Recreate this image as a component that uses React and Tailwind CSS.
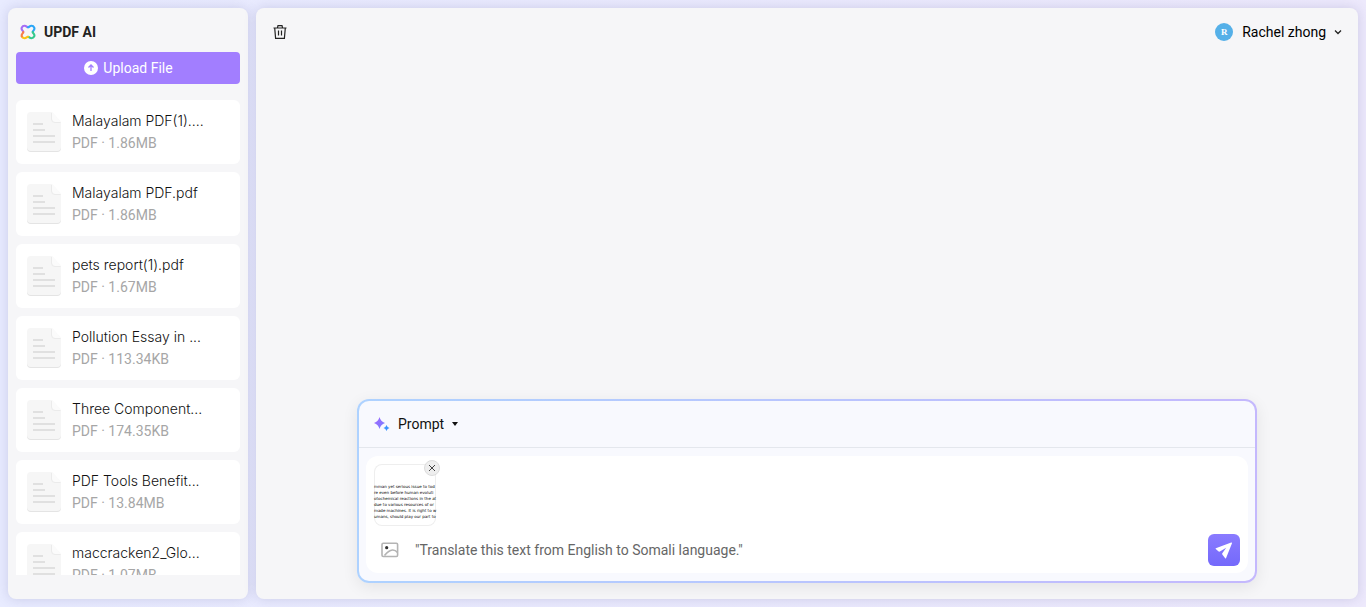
import React from "react";

const files = [
  { name: "Malayalam PDF(1)....", size: "PDF · 1.86MB" },
  { name: "Malayalam PDF.pdf", size: "PDF · 1.86MB" },
  { name: "pets report(1).pdf", size: "PDF · 1.67MB" },
  { name: "Pollution Essay in ...", size: "PDF · 113.34KB" },
  { name: "Three Component...", size: "PDF · 174.35KB" },
  { name: "PDF Tools Benefit...", size: "PDF · 13.84MB" },
  { name: "maccracken2_Glo...", size: "PDF · 1.07MB" },
];

const excerpt = [
  "mman yet serious issue to tod",
  "re even before human evoluti",
  "otochemical reactions in the at",
  "due to various resources of or",
  "made machines. It is right to w",
  "umans, should play our part to",
];

function Logo() {
  return (
    <svg className="size-4" viewBox="0 0 16 16" fill="none" strokeWidth="2.1" strokeLinecap="round" aria-hidden="true">
      <path d="M3.300 8C3.300 7.200 2.900 6.900 2.300 6.300C.7 4.500 2 1.900 4.500 1.800C6.400 1.700 6.700 3.300 8 3.300" stroke="#a66df5" />
      <path d="M8 3.300C9.300 3.300 9.600 1.700 11.500 1.800C14 1.900 15.300 4.500 13.700 6.300C13.100 6.900 12.700 7.200 12.700 8" stroke="#2ba6f7" />
      <path d="M12.700 8C12.700 8.800 13.100 9.100 13.700 9.700C15.300 11.500 14 14.100 11.500 14.200C9.600 14.300 9.300 12.700 8 12.700" stroke="#35c98c" />
      <path d="M8 12.700C6.700 12.700 6.400 14.300 4.500 14.200C3.200 14.100 2.200 13.400 1.800 12.300" stroke="#fbc414" />
      <path d="M1.800 12.300C1.500 11.400 1.600 10.400 2.300 9.700C2.900 9.100 3.300 8.800 3.300 8" stroke="#f67d4a" />
    </svg>
  );
}

function FileIcon() {
  return (
    <svg className="h-10 w-[34px] shrink-0" viewBox="0 0 34 40" aria-hidden="true">
      <path d="M4 1H25L34 11V36a4 4 0 0 1-4 4H4a4 4 0 0 1-4-4V4z" fill="#e4e4e4" />
      <path d="M4 0H25L34 10V35a4 4 0 0 1-4 4H4a4 4 0 0 1-4-4V4a4 4 0 0 1 4-4z" fill="#f6f6f6" />
      <path d="M25 0L34 10H28a3 3 0 0 1-3-3z" fill="#fbfbfb" />
      <path d="M24.500 1V7a3.500 3.500 0 0 0 3.500 3.500H33.500" fill="none" stroke="#ebebeb" />
      <path d="M6 11h10v2H6zM6 17h12v2H6zM6 23h22v2H6zM6 29h22v2H6z" fill="#e0e0e0" />
    </svg>
  );
}

function Sidebar() {
  return (
    <aside className="flex w-60 shrink-0 flex-col rounded-lg bg-[#f6f6f8] px-2 pt-3 pb-6 shadow-[0_0_12px_rgba(90,90,150,0.22)]">
      <div className="flex h-6 items-center gap-2 pl-1">
        <Logo />
        <h1 className="text-sm font-bold text-[#222]">UPDF AI</h1>
      </div>
      <button className="mt-2 flex h-8 shrink-0 items-center justify-center gap-1 rounded bg-[#a27eff] text-sm text-white">
        <svg className="size-4" viewBox="0 0 16 16" aria-hidden="true">
          <circle cx="8" cy="8" r="7" fill="#fff" />
          <path d="M8 11V5.500M5.500 7.500L8 5l2.500 2.500" fill="none" stroke="#a27eff" strokeWidth="1.300" />
        </svg>
        Upload File
      </button>
      <ul className="mt-4 flex min-h-0 flex-1 flex-col gap-2 overflow-hidden">
        {files.map((f) => (
          <li key={f.name} className="flex h-16 shrink-0 items-center gap-[11px] rounded-md bg-white pl-[11px]">
            <FileIcon />
            <div className="text-sm leading-[22px]">
              <p className="font-['Inter'] font-light text-[#111]">{f.name}</p>
              <p className="text-[#a6a6a6]">{f.size}</p>
            </div>
          </li>
        ))}
      </ul>
    </aside>
  );
}

function Composer() {
  return (
    <section className="w-full max-w-[900px] rounded-xl bg-[linear-gradient(90deg,#aed2ff,#c4b8fd)] p-0.5 shadow-[0_4px_16px_rgba(0,0,0,0.08)]">
      <div className="rounded-[10px] bg-[#f8f9fe]">
        <div className="flex h-[47px] items-center border-b border-[#e4e7ed] px-[15px]">
          <button className="flex items-center gap-2 text-sm text-[#111]">
            <svg className="size-4" viewBox="0 0 16 16" aria-hidden="true">
              <defs>
                <linearGradient id="spark" x1="0" y1="0" x2="1" y2="1">
                  <stop offset="0" stopColor="#a566ff" />
                  <stop offset="1" stopColor="#7480ff" />
                </linearGradient>
              </defs>
              <path d="M5.500 1Q6.600 5.400 11 7Q6.600 8.600 5.500 13Q4.400 8.600 0 7Q4.400 5.400 5.500 1z" fill="url(#spark)" />
              <path d="M12.500 9Q13.200 11.300 15.500 12Q13.200 12.700 12.500 15Q11.800 12.700 9.500 12Q11.800 11.300 12.500 9z" fill="#3a94ff" />
            </svg>
            Prompt
            <svg className="h-1 w-1.5" viewBox="0 0 6 4" aria-hidden="true">
              <path d="M0 0h6L3 4z" fill="#111" />
            </svg>
          </button>
        </div>
        <div className="px-[7px] py-2">
          <div className="rounded-xl bg-white px-2 pt-2 pb-[7px]">
            <div className="relative size-[62px] rounded-lg ring-1 ring-[#eeeeee] ring-inset">
              <div className="pt-5 font-['DejaVu_Sans'] text-[4px] leading-[6px] whitespace-nowrap text-black">
                {excerpt.map((line) => (
                  <p key={line}>{line}</p>
                ))}
              </div>
              <button
                aria-label="Remove image"
                className="absolute -top-1 -right-1 flex size-4 items-center justify-center rounded-full border border-[#dcdcdc] bg-[#eeeeee]"
              >
                <svg className="size-2" viewBox="0 0 8 8" aria-hidden="true">
                  <path d="M1 1l6 6M7 1L1 7" stroke="#444" strokeWidth="1" />
                </svg>
              </button>
            </div>
            <div className="mt-2 flex h-8 items-center">
              <button aria-label="Add image" className="ml-[7px]">
                <svg className="h-4 w-[18px]" viewBox="0 0 18 16" fill="none" aria-hidden="true">
                  <rect x="1" y="1.200" width="15.600" height="13.300" rx="1.200" stroke="#b4b4b4" strokeWidth="1.600" />
                  <circle cx="5.700" cy="5.700" r="1.600" fill="#333" />
                  <path d="M3.500 13.500C6 10.500 9 8.200 11.500 8C13.500 7.900 15.200 8.900 16.500 10.500" stroke="#b4b4b4" strokeWidth="1.600" />
                </svg>
              </button>
              <input
                type="text"
                aria-label="Message"
                defaultValue={'"Translate this text from English to Somali language."'}
                className="ml-4 min-w-0 flex-1 bg-transparent text-sm text-[#666] outline-none"
              />
              <button
                aria-label="Send"
                className="flex size-8 items-center justify-center rounded-md bg-gradient-to-b from-[#8a7bff] to-[#7469fb]"
              >
                <svg className="size-[18px]" viewBox="0 0 18 18" aria-hidden="true">
                  <path d="M16.200 1.500L.800 7.200Q.300 7.500.800 8L3.300 10.300Q4 10.900 4.900 10.500L11.200 6.800L7.300 12.300Q6.900 12.900 7.300 13.500L10.200 17.300Q10.700 17.800 11 17.200L17 2.300Q17.200 1.200 16.200 1.500z" fill="#fff" />
                </svg>
              </button>
            </div>
          </div>
        </div>
      </div>
    </section>
  );
}

export default function App() {
  return (
    <div className="flex h-screen gap-2 bg-[linear-gradient(90deg,#e8ebff,#ede9fc)] p-2 font-[Roboto,sans-serif]">
      <Sidebar />
      <main className="flex min-w-0 flex-1 flex-col rounded-lg bg-[#f6f6f8] px-4 pb-4 shadow-[0_0_12px_rgba(90,90,150,0.22)]">
        <header className="flex h-12 items-center justify-between">
          <button aria-label="Clear conversation">
            <svg className="size-4" viewBox="0 0 16 16" fill="none" stroke="#222" strokeWidth="1.200" aria-hidden="true">
              <path d="M1.500 4H14.500M5.500 3.700L6 1.600H10L10.500 3.700M2.700 4L3.600 14.400H12.400L13.300 4M6.500 6.500V11.500M9.500 6.500V11.500" />
            </svg>
          </button>
          <button className="flex items-center text-sm text-black">
            <span className="mr-[9px] flex size-[18px] items-center justify-center rounded-full bg-[#55b0e8] font-['Liberation_Serif',serif] text-[9px] font-bold text-white">
              R
            </span>
            Rachel zhong
            <svg className="ml-2 h-2 w-2" viewBox="0 0 8 8" fill="none" stroke="#222" strokeWidth="1.300" aria-hidden="true">
              <path d="M1 2.500L4 5.500L7 2.500" />
            </svg>
          </button>
        </header>
        <div className="flex flex-1 items-end justify-center">
          <Composer />
        </div>
      </main>
    </div>
  );
}
